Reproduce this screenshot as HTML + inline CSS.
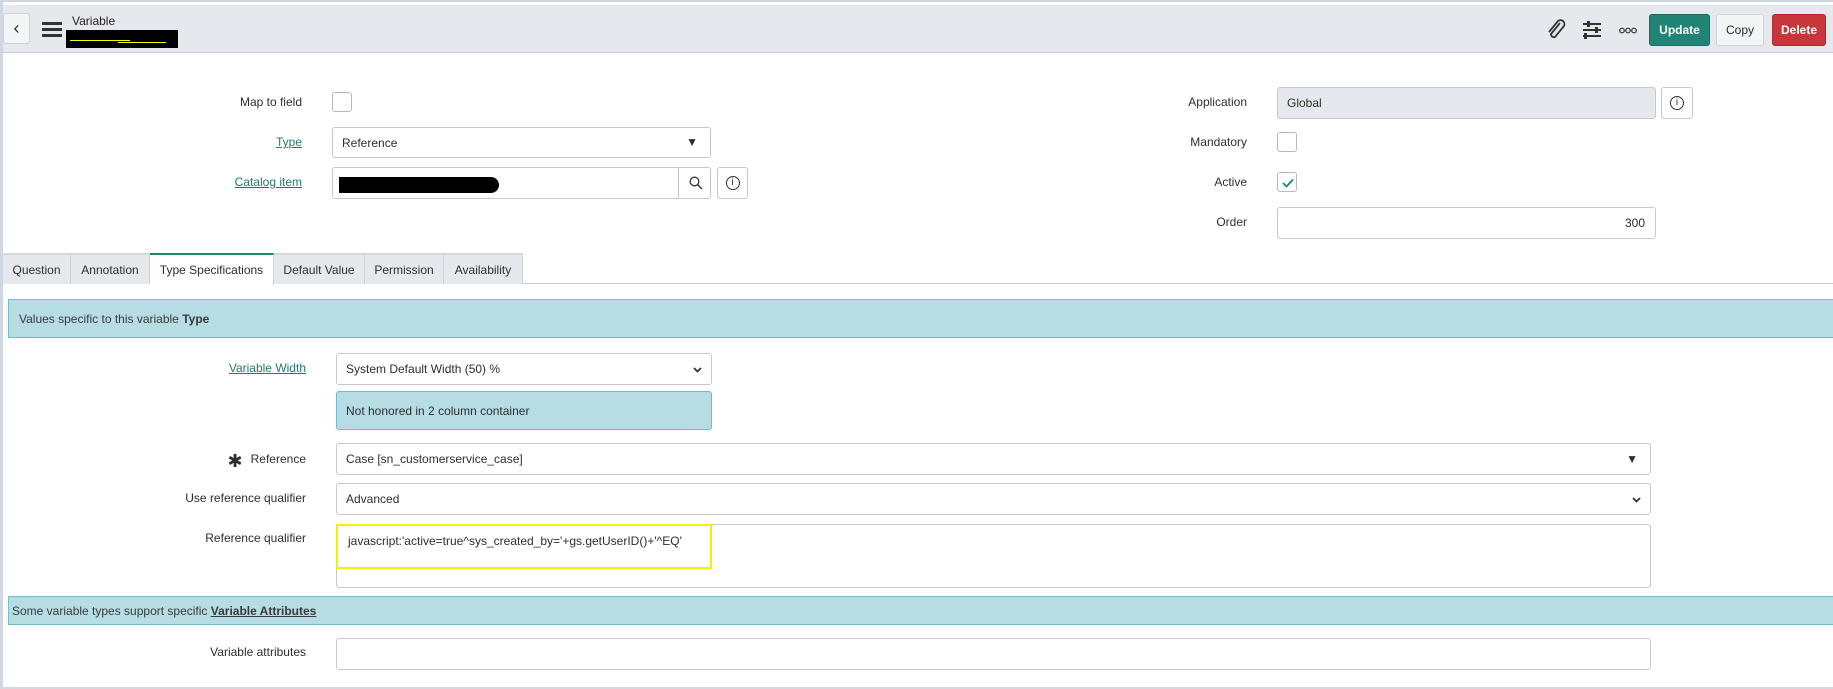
<!DOCTYPE html>
<html><head><meta charset="utf-8"><style>
*{box-sizing:border-box;margin:0;padding:0}
body{width:1833px;height:689px;background:#fff;font-family:"Liberation Sans",sans-serif;font-size:12px;color:#2e2e2e;position:relative;overflow:hidden}
.a{position:absolute}
.lbl{position:absolute;text-align:right;white-space:nowrap;font-size:12px}
.lnk{color:#1f7a6d;text-decoration:underline}
.inp{position:absolute;border:1px solid #c8c8c8;border-radius:3px;background:#fff;padding-left:9px;display:flex;align-items:center;white-space:nowrap}
.cb{position:absolute;border:1px solid #b8b8b8;border-radius:3px;background:#fff;width:20px;height:20px}
.tab{position:absolute;top:253px;height:31px;border-right:1px solid #d0d0d0;background:#e5e8ec;display:flex;align-items:center;justify-content:center;font-size:12px;border-top:2px solid #d5d8dc}
.banner{position:absolute;left:8px;right:0;background:#b6dde4;border:1px solid #6fbccb;border-right:none;display:flex;align-items:center;padding-left:10px;font-size:12px;color:#3a3a3a}
</style></head><body>
<div class="a" style="left:0;top:0;width:1833px;height:2px;background:#cfd7e3"></div>
<div class="a" style="left:0;top:0;width:3px;height:689px;background:#cfd7e3"></div>
<div class="a" style="left:3px;top:5px;width:1830px;height:48px;background:#e5e8ec;border-bottom:1px solid #c9ccd0"></div>
<div class="a" style="left:3px;top:13px;width:27px;height:31px;background:#f4f5f6;border:1px solid #cfd2d6;border-radius:3px;font-size:18px;text-align:center;line-height:28px;color:#333">‹</div>
<svg class="a" style="left:42px;top:22px" width="20" height="16"><rect y="0" width="20" height="3" fill="#333"/><rect y="6" width="20" height="3" fill="#333"/><rect y="12" width="20" height="3" fill="#333"/></svg>
<div class="a" style="left:72px;top:14px;font-size:12px;color:#222">Variable</div>
<div class="a" style="left:66px;top:30px;width:112px;height:18px;background:#000"></div>
<div class="a" style="left:70px;top:40px;width:60px;height:1px;background:#ff0"></div>
<div class="a" style="left:118px;top:42px;width:48px;height:1px;background:#ff0"></div>
<svg class="a" style="left:1545px;top:18px" width="22" height="24" viewBox="0 0 22 24"><path d="M15 5 L6 16 a3 3 0 0 0 4 3 L19 8 a4 4 0 0 0 -6 -5 L4 14" fill="none" stroke="#333" stroke-width="1.8"/></svg>
<svg class="a" style="left:1582px;top:20px" width="20" height="20"><g stroke="#333" stroke-width="2"><line x1="1" y1="4" x2="19" y2="4"/><line x1="1" y1="10" x2="19" y2="10"/><line x1="1" y1="16" x2="19" y2="16"/></g><g fill="#333"><rect x="5" y="1" width="3" height="6"/><rect x="13" y="7" width="3" height="6"/><rect x="2" y="13" width="3" height="6"/></g></svg>
<svg class="a" style="left:1619px;top:27px" width="18" height="7"><g fill="none" stroke="#333" stroke-width="1.2"><circle cx="3" cy="3.5" r="2.3"/><circle cx="9" cy="3.5" r="2.3"/><circle cx="15" cy="3.5" r="2.3"/></g></svg>
<div class="a" style="left:1649px;top:14px;width:61px;height:32px;background:#1f8476;border:1px solid #176a5e;border-radius:3px;color:#fff;font-weight:bold;display:flex;align-items:center;justify-content:center">Update</div>
<div class="a" style="left:1716px;top:14px;width:48px;height:32px;background:#f4f5f6;border:1px solid #cfd2d6;border-radius:3px;display:flex;align-items:center;justify-content:center">Copy</div>
<div class="a" style="left:1772px;top:14px;width:54px;height:32px;background:#c8363b;border:1px solid #a72b30;border-radius:3px;color:#fff;font-weight:bold;display:flex;align-items:center;justify-content:center">Delete</div>

<div class="lbl" style="right:1531px;top:95px">Map to field</div>
<div class="cb" style="left:332px;top:92px"></div>
<div class="lbl lnk" style="right:1531px;top:135px">Type</div>
<div class="inp" style="left:332px;top:127px;width:379px;height:31px">Reference<span class="a" style="right:12px;top:7px;font-size:12px">▼</span></div>
<div class="lbl lnk" style="right:1531px;top:175px">Catalog item</div>
<div class="inp" style="left:332px;top:167px;width:379px;height:32px"><div class="a" style="left:6px;top:9px;width:160px;height:16px;background:#000;border-radius:0 8px 8px 0"></div><div class="a" style="left:345px;top:0;width:33px;height:30px;border-left:1px solid #c8c8c8"><svg style="position:absolute;left:10px;top:8px" width="14" height="14"><circle cx="5.5" cy="5.5" r="4.3" fill="none" stroke="#333" stroke-width="1.3"/><line x1="8.7" y1="8.7" x2="13" y2="13" stroke="#333" stroke-width="1.4"/></svg></div></div>
<div class="inp" style="left:717px;top:167px;width:31px;height:32px;padding:0;justify-content:center"><span style="border:1px solid #333;border-radius:50%;width:14px;height:14px;font-size:10px;line-height:12px;text-align:center">i</span></div>

<div class="lbl" style="right:586px;top:95px">Application</div>
<div class="inp" style="left:1277px;top:87px;width:379px;height:32px;background:#e5e8ec">Global</div>
<div class="inp" style="left:1661px;top:87px;width:32px;height:32px;padding:0;justify-content:center"><span style="border:1px solid #333;border-radius:50%;width:14px;height:14px;font-size:10px;line-height:12px;text-align:center">i</span></div>
<div class="lbl" style="right:586px;top:135px">Mandatory</div>
<div class="cb" style="left:1277px;top:132px"></div>
<div class="lbl" style="right:586px;top:175px">Active</div>
<div class="cb" style="left:1277px;top:172px"><svg style="position:absolute;left:4px;top:5px" width="12" height="10"><path d="M1 5 L4.5 8.5 L11 1.5" fill="none" stroke="#1f8476" stroke-width="1.8"/></svg></div>
<div class="lbl" style="right:586px;top:215px">Order</div>
<div class="inp" style="left:1277px;top:207px;width:379px;height:32px;justify-content:flex-end;padding-right:10px">300</div>

<div class="a" style="left:0;top:283px;width:1833px;height:1px;background:#c9ccd0"></div>
<div class="tab" style="left:3px;width:68px">Question</div>
<div class="tab" style="left:71px;width:79px">Annotation</div>
<div class="tab" style="left:150px;width:124px;background:#fff;border-top:2px solid #1f8476;height:32px">Type Specifications</div>
<div class="tab" style="left:274px;width:91px">Default Value</div>
<div class="tab" style="left:365px;width:79px">Permission</div>
<div class="tab" style="left:444px;width:79px">Availability</div>

<div class="banner" style="top:299px;height:39px">Values specific to this variable&nbsp;<b>Type</b></div>
<div class="lbl lnk" style="right:1527px;top:361px">Variable Width</div>
<div class="inp" style="left:336px;top:353px;width:376px;height:32px">System Default Width (50) %<svg class="a" style="right:9px;top:13px" width="9" height="6"><path d="M1 1 L4.5 4.5 L8 1" fill="none" stroke="#333" stroke-width="1.8"/></svg></div>
<div class="inp" style="left:336px;top:391px;width:376px;height:39px;background:#b6dde4;border-color:#6fbccb">Not honored in 2 column container</div>
<div class="lbl" style="right:1527px;top:451px"><span style="font-size:18px;vertical-align:-4px;margin-right:8px">✱</span>Reference</div>
<div class="inp" style="left:336px;top:443px;width:1315px;height:32px">Case [sn_customerservice_case]<span class="a" style="right:12px;top:8px">▼</span></div>
<div class="lbl" style="right:1527px;top:491px">Use reference qualifier</div>
<div class="inp" style="left:336px;top:483px;width:1315px;height:32px">Advanced<svg class="a" style="right:9px;top:13px" width="9" height="6"><path d="M1 1 L4.5 4.5 L8 1" fill="none" stroke="#333" stroke-width="1.8"/></svg></div>
<div class="lbl" style="right:1527px;top:531px">Reference qualifier</div>
<div class="inp" style="left:336px;top:524px;width:1315px;height:64px"></div>
<div class="a" style="left:336px;top:524px;width:376px;height:45px;border:2px solid #f5ef00;padding:8px 0 0 10px;font-size:12px;white-space:nowrap">javascript:'active=true^sys_created_by='+gs.getUserID()+'^EQ'</div>
<div class="banner" style="top:596px;height:29px;padding-left:3px">Some variable types support specific&nbsp;<b style="text-decoration:underline">Variable Attributes</b></div>
<div class="lbl" style="right:1527px;top:645px">Variable attributes</div>
<div class="inp" style="left:336px;top:638px;width:1315px;height:32px"></div>
<div class="a" style="left:0;top:687px;width:1833px;height:2px;background:#d5d8dc"></div>
</body></html>
